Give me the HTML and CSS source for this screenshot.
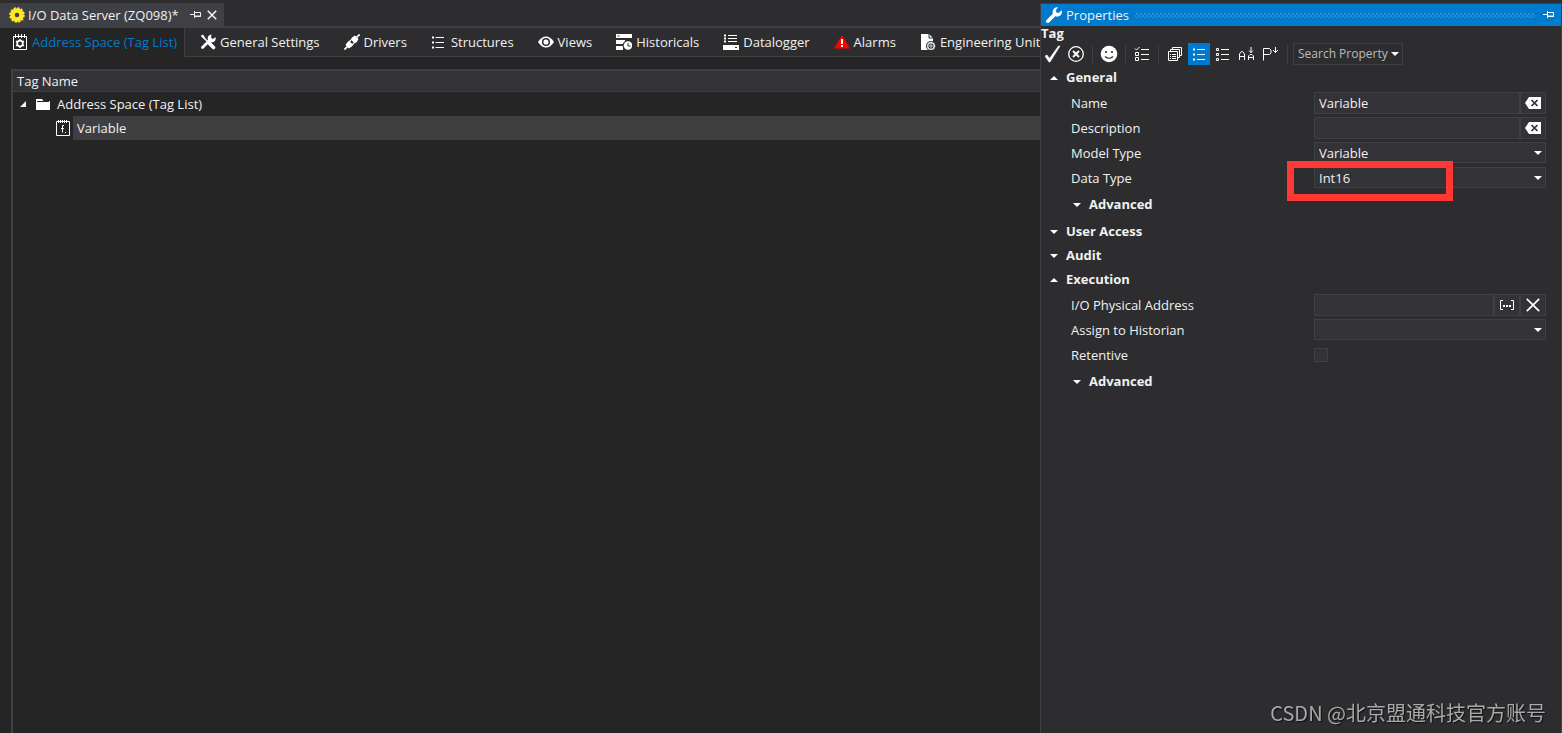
FILE: index.html
```html
<!DOCTYPE html>
<html lang="en">
<head>
<meta charset="utf-8">
<title>I/O Data Server (ZQ098)</title>
<link rel="stylesheet" href="styles.css">
</head>
<body>
<div class="workspace">
  <main class="editor">
    <header class="doc-tabs">
      <div class="doc-tab">
        <svg class="icon" viewBox="0 0 16 16"><circle cx="8" cy="8" r="6.8" fill="none" stroke="#ffe926" stroke-width="2" stroke-dasharray="2.3 1.26"/><circle cx="8" cy="8" r="4.5" fill="none" stroke="#ffe926" stroke-width="4.4"/></svg>
        <span class="doc-title">I/O Data Server (ZQ098)*</span>
        <button class="mini" aria-label="Pin"><svg width="12" height="10" viewBox="0 0 12 10"><path d="M0 4.5h4M4.5 1v7M4.500 2.500h6v4h-6M5 6h6" fill="none" stroke="#f1f1f1"/></svg></button>
        <button class="mini" aria-label="Close"><svg width="10" height="10" viewBox="0 0 10 10"><path d="M.8.8l8.400 8.400M9.200.8L.8 9.200" fill="none" stroke="#f1f1f1" stroke-width="1.600"/></svg></button>
      </div>
    </header>
    <nav class="sections">
      <button class="section active"><svg class="icon" viewBox="0 0 16 16"><path d="M1.500 2.500h13v13h-13z" fill="none" stroke="#fff"/><path d="M3.500 0v4M6.500 0v4M9.500 0v4M12.500 0v4" stroke="#fff"/><circle cx="8" cy="9.500" r="2.800" fill="none" stroke="#fff" stroke-width="1.800"/><path d="M8 5v2M8 12v2M4 7.200l1.600 1M10.400 10.800l1.600 1M4 11.800l1.600-1M10.400 8.200l1.600-1" stroke="#fff" stroke-width="1.500"/></svg>Address Space (Tag List)</button>
      <button class="section"><svg class="icon" viewBox="0 0 16 16"><path d="M1.500 1.500l6 6" stroke="#fff" stroke-width="1.600"/><path d="M1 2l2-1.500 2 3-1.500 1z" fill="#fff"/><path d="M9.500 9.500l4 4" stroke="#fff" stroke-width="3.600" stroke-linecap="round"/><path d="M2.500 13.500l8-8" stroke="#fff" stroke-width="2.800" stroke-linecap="round"/><path d="M15.500 3.200A4 4 0 1 1 11.500.4L11 3.500l1.700 1.600z" fill="#fff"/></svg>General Settings</button>
      <button class="section"><svg class="icon" viewBox="0 0 16 16"><path d="M15.600.4l-3 3M.4 15.600l3-3" stroke="#fff" stroke-width="1.600"/><path d="M8 3.500l3-2 3.500 3.500-2 3.500-2 .8L6.800 5.400zM5 6.800l4.300 4.300-1.500 1.500-3 1.900L1.500 11 3.400 8.300z" fill="#fff"/><path d="M5.500 7.500l1.500-1.400M8.500 10.500l1.500-1.400" stroke="#fff" stroke-width="1.400"/></svg>Drivers</button>
      <button class="section"><svg class="icon" viewBox="0 0 16 16"><path d="M1 3.500h2M1 8.500h2M1 13.500h2" stroke="#fff" stroke-width="2"/><path d="M4.500 3.500h8.500M4.500 8.500h8.500M4.500 13.500h8.500" stroke="#fff"/></svg>Structures</button>
      <button class="section"><svg class="icon" viewBox="0 0 16 16"><path d="M0 8Q3.500 2.500 8 2.500T16 8Q12.500 13.500 8 13.500T0 8z" fill="#fff"/><circle cx="8" cy="8" r="3.300" fill="none" stroke="#2d2d30" stroke-width="1.500"/><circle cx="7" cy="7" r="1.200" fill="#fff"/></svg>Views</button>
      <button class="section"><svg class="icon" viewBox="0 0 16 16"><path d="M0 0h16v4H0zM0 6h9v4H0zM0 12h7v4H0z" fill="#fff"/><path d="M1.500 1.500h2v1h-2z" fill="#2d2d30"/><circle cx="12" cy="11.500" r="5.400" fill="#2d2d30"/><circle cx="12" cy="11.500" r="4.300" fill="#fff"/><path d="M12 9v3h2.500" fill="none" stroke="#2d2d30"/></svg>Historicals</button>
      <button class="section"><svg class="icon" viewBox="0 0 16 16"><path d="M1 1.500h2M1 4.500h2M1 7.500h2" stroke="#fff" stroke-width="2"/><path d="M5 1.500h9M5 4.500h9M5 7.500h9" stroke="#fff"/><path d="M0 11h16v5H0z" fill="#fff"/><path d="M12 13.500h2" stroke="#2d2d30"/></svg>Datalogger</button>
      <button class="section"><svg class="icon" viewBox="0 0 16 16"><path d="M8 1l8 13.500H0z" fill="#f00"/><path d="M7 5h2v5H7zM7 11h2v2H7z" fill="#fff"/></svg>Alarms</button>
      <button class="section"><svg class="icon" viewBox="0 0 16 16"><path d="M1 0h8l4 4v12H1z" fill="#fff"/><path d="M9 0v4h4" fill="none" stroke="#2d2d30"/><circle cx="11" cy="12" r="5" fill="#2d2d30"/><circle cx="11" cy="12" r="3.300" fill="none" stroke="#ddd" stroke-width="1.500"/><circle cx="11" cy="12" r="1.200" fill="none" stroke="#ddd"/><path d="M11 7.500v2M15.500 12h-2M8 15l1-1M14 15l-1-1" stroke="#ddd" stroke-width="1.200"/></svg>Engineering Unit</button>
    </nav>
    <section class="tags">
      <h2 class="tags-head">Tag Name</h2>
      <ul class="tree">
        <li class="node"><svg class="expander" viewBox="0 0 6 6"><path d="M6 0v6H0z" fill="#f1f1f1"/></svg><svg class="icon folder" viewBox="0 0 16 16"><path d="M1 3h6l1.500 2H15v9H1z" fill="#fff"/><path d="M2 5.500h12" stroke="#252526"/></svg><span class="node-name">Address Space (Tag List)</span></li>
        <li class="node child"><svg class="icon" viewBox="0 0 16 16"><path d="M1.500 1.500h13v14h-13z" fill="none" stroke="#fff"/><path d="M3.500 0v3M5.500 0v3M7.500 0v3M9.500 0v3M11.500 0v3" stroke="#fff"/><path d="M9 5.500H7.500v7M6 8.500h3M10 12.500h1" fill="none" stroke="#fff"/></svg><span class="node-name selected">Variable</span></li>
      </ul>
    </section>
  </main>

  <aside class="props">
    <header class="props-title">
      <svg class="icon" viewBox="0 0 16 16"><path d="M1.800 14.200L9 7" stroke="#fff" stroke-width="3.600" stroke-linecap="round"/><path d="M15.600 3.200A4.700 4.700 0 1 1 12 .3L9.800 3.200l.6 2.200 2.200.6z" fill="#fff"/></svg>
      <span>Properties</span>
      <span class="grip"></span>
      <button class="mini" aria-label="Pin panel"><svg width="12" height="10" viewBox="0 0 12 10"><path d="M0 4.500h4M4.500 1v7M4.500 2.500h6v4h-6M5 6h6" fill="none" stroke="#fff"/></svg></button>
    </header>
    <h2 class="object-name">Tag</h2>
    <div class="tools">
      <button class="tool" aria-label="Apply"><svg class="glyph" viewBox="0 0 18 18"><path d="M2 11l2-1 2.500 3.500L15.500 1h1.500L7 17H6z" fill="#fff" stroke="#fff" stroke-width=".6"/></svg></button>
      <button class="tool" aria-label="Cancel"><svg class="glyph" viewBox="0 0 18 18"><circle cx="9" cy="9" r="7.300" fill="none" stroke="#fff" stroke-width="1.300"/><path d="M6 6l6 6M12 6l-6 6" stroke="#fff" stroke-width="1.900"/></svg></button>
      <i class="sep"></i>
      <button class="tool" aria-label="Basic mode"><svg class="glyph" viewBox="0 0 18 18"><circle cx="9" cy="9" r="8.300" fill="#fff"/><circle cx="6" cy="7" r="1.100" fill="#2d2d30"/><circle cx="12" cy="7" r="1.100" fill="#2d2d30"/><path d="M5 11.500q4 3.500 8 0" fill="none" stroke="#2d2d30" stroke-width="1.200"/></svg></button>
      <i class="sep"></i>
      <button class="tool" aria-label="Checked properties"><svg class="glyph" viewBox="0 0 18 18"><path d="M2 3.500l1.500 1.500L6.500 2M2.500 7.500h3v3h-3zM2.500 12.500h3v3h-3zM8 4.500h8M8 9.500h8M8 14.500h8" fill="none" stroke="#fff"/></svg></button>
      <i class="sep"></i>
      <button class="tool" aria-label="Group"><svg class="glyph" viewBox="0 0 18 18"><path d="M6.500 4V2.500h9v8H14M4.500 6V4.500h9v8H12M2.500 6.500h9v9h-9zM4 9.500h1M6 9.500h4M4 11.500h1M6 11.500h4M4 13.500h1M6 13.500h4" fill="none" stroke="#fff"/></svg></button>
      <button class="tool on" aria-label="Categories"><svg class="glyph" viewBox="0 0 18 18"><path d="M3 4.500h2M3 9.500h2M3 14.500h2" stroke="#fff" stroke-width="2"/><path d="M7 4.500h8M7 9.500h8M7 14.500h8" stroke="#fff"/></svg></button>
      <button class="tool" aria-label="List"><svg class="glyph" viewBox="0 0 18 18"><path d="M2.500 3.500h2v2h-2zM2.500 8.500h2v2h-2zM2.500 13.500h2v2h-2z" fill="none" stroke="#fff"/><path d="M7 4.500h8M7 9.500h8M7 14.500h8" stroke="#fff"/></svg></button>
      <button class="tool" aria-label="Sort"><svg class="glyph" viewBox="0 0 18 18"><path d="M1.500 15V9l2-2.500h1l2 2.500v6M1.500 11.500h5M10.500 15v-4l1.500-1.500h2l1.500 1.500v4M10.500 12.500h5M13 2v6M11 5.500l2 2 2-2" fill="none" stroke="#fff"/></svg></button>
      <button class="tool" aria-label="Sort by property"><svg class="glyph" viewBox="0 0 18 18"><path d="M1.500 15.500v-12h6l1.500 1.500v3l-1.500 1.500h-6M13.500 2v6M11 5l2.500 2.500L16 5" fill="none" stroke="#fff"/></svg></button>
      <i class="sep"></i>
      <span class="pick search"><select aria-label="Search Property"><option>Search Property</option></select></span>
    </div>

    <form class="groups">
      <button type="button" class="group open">General</button>
      <div class="fields">
        <div class="field"><label for="name">Name</label><div class="value"><input id="name" type="text" value="Variable"><button type="button" class="act" aria-label="Clear name"><svg width="16" height="12" viewBox="0 0 16 12"><path d="M4 0h12v12H4L0 6z" fill="#fff"/><path d="M6.500 3l6 6M12.500 3l-6 6" stroke="#333337" stroke-width="1.700"/></svg></button></div></div>
        <div class="field"><label for="desc">Description</label><div class="value"><input id="desc" type="text"><button type="button" class="act" aria-label="Clear description"><svg width="16" height="12" viewBox="0 0 16 12"><path d="M4 0h12v12H4L0 6z" fill="#fff"/><path d="M6.500 3l6 6M12.500 3l-6 6" stroke="#333337" stroke-width="1.700"/></svg></button></div></div>
        <div class="field"><label for="model">Model Type</label><div class="value pick"><select id="model"><option>Variable</option></select></div></div>
        <div class="field"><label for="dtype">Data Type</label><div class="value pick marked"><select id="dtype"><option>Int16</option></select></div></div>
      </div>
      <button type="button" class="group sub">Advanced</button>
      <button type="button" class="group">User Access</button>
      <button type="button" class="group">Audit</button>
      <button type="button" class="group open">Execution</button>
      <div class="fields">
        <div class="field"><label for="addr">I/O Physical Address</label><div class="value"><input id="addr" type="text"><button type="button" class="act" aria-label="Browse"><svg width="16" height="12" viewBox="0 0 16 12"><path d="M4 1.500H1.500v9H4M12 1.500h2.500v9H12" fill="none" stroke="#fff"/><path d="M4 6h2v2H4zM7 6h2v2H7zM10 6h2v2h-2z" fill="#fff"/></svg></button><button type="button" class="act" aria-label="Clear address"><svg width="14" height="14" viewBox="0 0 14 14"><path d="M.8.8l12.400 12.400M13.200.8L.8 13.200" stroke="#fff" stroke-width="1.700"/></svg></button></div></div>
        <div class="field"><label for="hist">Assign to Historian</label><div class="value pick"><select id="hist"><option></option></select></div></div>
        <div class="field"><label for="ret">Retentive</label><div class="value"><input id="ret" type="checkbox"></div></div>
      </div>
      <button type="button" class="group sub">Advanced</button>
    </form>
  </aside>
</div>
<p class="watermark">CSDN @北京盟通科技官方账号</p>
</body>
</html>
```
FILE: styles.css
```css
*, *::before, *::after { box-sizing: border-box; }
body {
  margin: 0;
  background: #2d2d30;
  color: #f1f1f1;
  font: 13px/16px "Open Sans", "Noto Sans", sans-serif;
}
button, input, select { font: inherit; color: inherit; }
button { background: none; border: 0; padding: 0; }
h2 { margin: 0; font-size: inherit; }
svg { display: block; flex: none; }
.icon { width: 16px; height: 16px; }

.workspace {
  display: grid;
  grid-template-columns: 1fr 522px;
  min-height: 100vh;
}
.editor {
  display: flex;
  flex-direction: column;
  min-width: 0;
  overflow: hidden;
  background: #252526;
}

.doc-tabs {
  display: flex;
  padding-top: 3px;
  background: #2d2d30;
  border-bottom: 2px solid #3f3f46;
}
.doc-tab {
  display: flex;
  align-items: center;
  height: 23px;
  padding: 0 7px 0 9px;
  gap: 3px;
  background: #3f3f46;
}
.doc-title { margin-right: 8px; }
.mini { display: flex; }
.doc-tab .mini + .mini { margin-left: 2px; }

.sections { display: flex; height: 29px; background: #2d2d30; }
.section {
  display: flex;
  flex: none;
  align-items: center;
  gap: 4px;
  padding: 0 12px;
  border-bottom: 1px solid #3f3f46;
  white-space: nowrap;
}
.section.active {
  padding-right: 7px;
  background: #252526;
  border-bottom-color: #252526;
  border-right: 1px solid #3f3f46;
  color: #007acc;
}
.section.active + .section { padding-left: 15px; }
.section:last-child { flex-grow: 1; padding-right: 0; }

.tags {
  flex: 1;
  margin: 12px 0 0 11px;
  border: solid #3f3f46;
  border-width: 2px 0 0 2px;
}
.tags-head {
  padding: 2px 4px;
  height: 21px;
  background: #333337;
  border-bottom: 1px solid #3f3f46;
  font-weight: 400;
}
.tree { margin: 0; padding: 0; list-style: none; }
.node { display: flex; align-items: center; height: 24px; padding-left: 7px; }
.node.child { padding-left: 42px; }
.expander { width: 6px; height: 6px; margin-right: 9px; }
.node-name { flex: 1; padding: 4px; }
.folder + .node-name { padding-left: 6px; }
.child .node-name { margin-left: 2px; }
.selected { background: #3f3f41; }

.props {
  margin-top: 3px;
  border: 1px solid #3f3f46;
  border-bottom: 0;
  background: #2d2d30;
}
.props-title {
  display: flex;
  align-items: center;
  gap: 4px;
  height: 22px;
  padding: 0 6px 0 5px;
  background: #007acc;
}
.grip {
  flex: 1;
  height: 5px;
  margin: 0 4px 0 2px;
  background-image:
    conic-gradient(#2b8fd6 25%, transparent 0),
    conic-gradient(#2b8fd6 25%, transparent 0);
  background-size: 4px 4px;
  background-position: -1px 0, 1px 2px;
}
.object-name { line-height: 14px; }
.tools {
  display: flex;
  align-items: center;
  gap: 2px;
  height: 22px;
  margin-top: 3px;
}
.tool {
  display: flex;
  align-items: center;
  justify-content: center;
  width: 22px;
  height: 22px;
}
.tool.on { background: #007acc; }
.glyph { width: 18px; height: 18px; }
.sep { width: 1px; height: 18px; margin: 0 3px; background: #3f3f46; }

.pick { position: relative; display: flex; }
.pick select {
  appearance: none;
  width: 100%;
  height: 21px;
  padding: 0 20px 0 4px;
  background: #333337;
  border: 1px solid #3f3f46;
  border-radius: 0;
}
.pick::after {
  content: "";
  position: absolute;
  top: 9px;
  right: 4px;
  border: 4px solid transparent;
  border-top-color: #fff;
  border-bottom: 0;
}
.search { width: 110px; }
.search select { height: 22px; background: #2d2d30; color: #bbb; font-size: 12px; padding-right: 0; }

.groups { display: flex; flex-direction: column; }
.group {
  display: flex;
  align-items: center;
  gap: 8px;
  height: 24px;
  padding-left: 9px;
  font-weight: 700;
}
.group::before {
  content: "";
  margin-top: 2px;
  border: 4px solid transparent;
  border-top-color: #fff;
  border-bottom: 0;
}
.group.open::before {
  border-top: 0;
  border-bottom: 4px solid #fff;
}
.group.sub { height: 28px; margin-bottom: 1px; padding-left: 32px; }
.fields { padding: 1px 15px 0 30px; }
.field {
  display: grid;
  grid-template-columns: 243px 1fr;
  align-items: center;
  height: 25px;
}
.value { min-width: 0; }
.value:not(.pick) { display: flex; }
.value input[type="text"] {
  flex: 1;
  min-width: 0;
  height: 22px;
  padding: 0 4px;
  background: #333337;
  border: 1px solid #3f3f46;
}
.act {
  display: flex;
  align-items: center;
  justify-content: center;
  width: 26px;
  height: 22px;
  background: #333337;
  border: 1px solid #3f3f46;
}
.value input[type="checkbox"] {
  appearance: none;
  width: 14px;
  height: 14px;
  margin: 0;
  background: #333337;
  border: 1px solid #3f3f46;
}
.marked::before {
  content: "";
  position: absolute;
  z-index: 1;
  top: -6px;
  left: -27px;
  width: 166px;
  height: 40px;
  border: 7px solid #ff3835;
  pointer-events: none;
}

.watermark {
  position: fixed;
  right: 16px;
  bottom: 8px;
  margin: 0;
  color: #a9a9ab;
  font: 20px/24px "Noto Sans CJK SC", sans-serif;
  text-shadow: 1px 1px 1px #111;
}
```
